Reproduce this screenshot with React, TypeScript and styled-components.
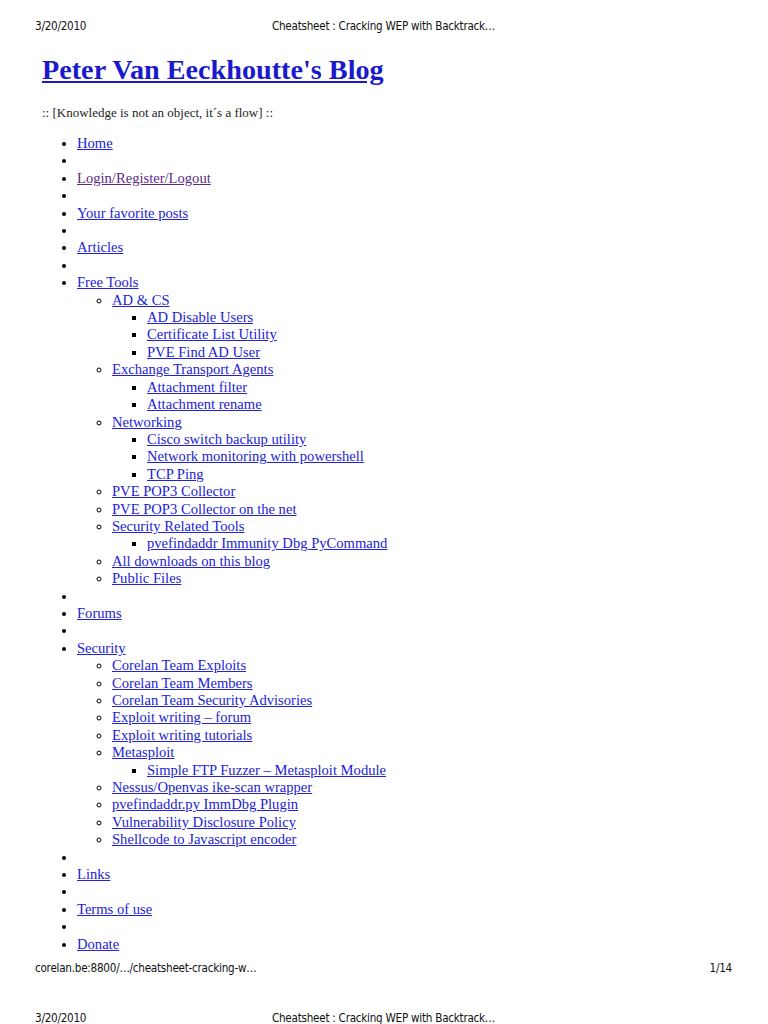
import React from 'react';
import styled, { createGlobalStyle } from 'styled-components';

type Node = { label?: string; visited?: boolean; children?: Node[] };

const GlobalStyle = createGlobalStyle`
  html, body {
    margin: 0;
    padding: 0;
    background: #ffffff;
  }
  body {
    font-family: "Liberation Serif", "Times New Roman", serif;
    color: #000;
  }
`;

const Sheet = styled.div`
  width: 768px;
  height: 1024px;
  overflow: hidden;
  display: flex;
  flex-direction: column;
`;

const PrintBar = styled.div<{ $top: number }>`
  display: grid;
  grid-template-columns: 1fr auto 1fr;
  align-items: center;
  padding: 0 36px 0 35px;
  margin-top: ${(p) => p.$top}px;
  height: 16px;
  font-family: "Liberation Sans Narrow", "DejaVu Sans Condensed", "Liberation Sans", sans-serif;
  font-size: 11.6px;
  letter-spacing: -0.25px;
  color: #111;
`;

const BarRight = styled.span`
  text-align: right;
`;

const Content = styled.div`
  padding-left: 42px;
`;

const Title = styled.h1`
  margin: 20px 0 0;
  font-size: 28.2px;
  line-height: 34px;
  font-weight: bold;

  a {
    color: #1a1acc;
  }
`;

const Tagline = styled.p`
  margin: 17px 0 0;
  font-size: 13px;
  line-height: 17px;
  color: #222;
`;

const List = styled.ul<{ $level: number }>`
  margin: ${(p) => (p.$level === 1 ? '14px 0 0' : '0')};
  padding-left: 35px;
  list-style-type: ${(p) => (p.$level === 1 ? 'disc' : p.$level === 2 ? 'circle' : 'square')};
  font-size: 14.6px;
  line-height: 17.4px;
`;

const Item = styled.li`
  min-height: 17.4px;
`;

const Link = styled.a<{ $visited?: boolean }>`
  color: ${(p) => (p.$visited ? '#5b2a86' : '#2222d6')};
  text-decoration: underline;
`;

const menu: Node[] = [
  { label: 'Home' },
  {},
  { label: 'Login/Register/Logout', visited: true },
  {},
  { label: 'Your favorite posts' },
  {},
  { label: 'Articles' },
  {},
  {
    label: 'Free Tools',
    children: [
      {
        label: 'AD & CS',
        children: [
          { label: 'AD Disable Users' },
          { label: 'Certificate List Utility' },
          { label: 'PVE Find AD User' },
        ],
      },
      {
        label: 'Exchange Transport Agents',
        children: [{ label: 'Attachment filter' }, { label: 'Attachment rename' }],
      },
      {
        label: 'Networking',
        children: [
          { label: 'Cisco switch backup utility' },
          { label: 'Network monitoring with powershell' },
          { label: 'TCP Ping' },
        ],
      },
      { label: 'PVE POP3 Collector' },
      { label: 'PVE POP3 Collector on the net' },
      {
        label: 'Security Related Tools',
        children: [{ label: 'pvefindaddr Immunity Dbg PyCommand' }],
      },
      { label: 'All downloads on this blog' },
      { label: 'Public Files' },
    ],
  },
  {},
  { label: 'Forums' },
  {},
  {
    label: 'Security',
    children: [
      { label: 'Corelan Team Exploits' },
      { label: 'Corelan Team Members' },
      { label: 'Corelan Team Security Advisories' },
      { label: 'Exploit writing – forum' },
      { label: 'Exploit writing tutorials' },
      {
        label: 'Metasploit',
        children: [{ label: 'Simple FTP Fuzzer – Metasploit Module' }],
      },
      { label: 'Nessus/Openvas ike-scan wrapper' },
      { label: 'pvefindaddr.py ImmDbg Plugin' },
      { label: 'Vulnerability Disclosure Policy' },
      { label: 'Shellcode to Javascript encoder' },
    ],
  },
  {},
  { label: 'Links' },
  {},
  { label: 'Terms of use' },
  {},
  { label: 'Donate' },
];

const Menu: React.FC<{ items: Node[]; level: number }> = ({ items, level }) => (
  <List $level={level}>
    {items.map((item, i) => (
      <Item key={`${level}-${i}`}>
        {item.label && (
          <Link href="#" $visited={item.visited}>
            {item.label}
          </Link>
        )}
        {item.children && <Menu items={item.children} level={level + 1} />}
      </Item>
    ))}
  </List>
);

export default function App() {
  return (
    <Sheet>
      <GlobalStyle />
      <PrintBar $top={19}>
        <span>3/20/2010</span>
        <span>Cheatsheet : Cracking WEP with Backtrack…</span>
        <span />
      </PrintBar>
      <Content>
        <Title>
          <a href="#">Peter Van Eeckhoutte's Blog</a>
        </Title>
        <Tagline>:: [Knowledge is not an object, it´s a flow] ::</Tagline>
        <Menu items={menu} level={1} />
      </Content>
      <PrintBar $top={8}>
        <span>corelan.be:8800/…/cheatsheet-cracking-w…</span>
        <span />
        <BarRight>1/14</BarRight>
      </PrintBar>
      <PrintBar $top={36}>
        <span>3/20/2010</span>
        <span>Cheatsheet : Cracking WEP with Backtrack…</span>
        <span />
      </PrintBar>
    </Sheet>
  );
}
